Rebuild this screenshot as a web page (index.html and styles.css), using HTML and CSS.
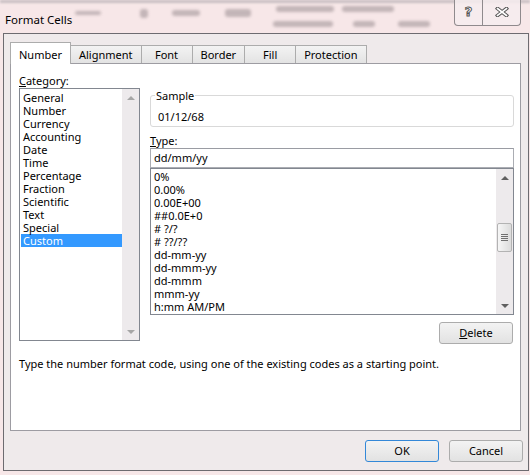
FILE: index.html
```html
<!DOCTYPE html>
<html lang="en">
<head>
<meta charset="utf-8">
<title>Format Cells</title>
<link rel="stylesheet" href="styles.css">
</head>
<body>
<div class="window">
  <div class="backdrop" aria-hidden="true">
    <span class="band"></span>
    <span class="blob b1"></span>
    <span class="blob b2"></span>
    <span class="blob b3"></span>
    <span class="blob b4"></span>
    <span class="blob b5"></span>
    <span class="blob b6"></span>
    <span class="blob b7"></span>
    <span class="blob b8"></span>
    <span class="blob b9"></span>
  </div>
  <header class="titlebar">
    <span class="title">Format Cells</span>
    <div class="caption">
      <span class="cap cap-help">?</span>
      <span class="cap cap-close">
        <svg width="14" height="10" viewBox="0 0 14 10">
          <path d="M2.5 1.5 L11.5 8.5 M11.5 1.5 L2.5 8.5" stroke="#555" stroke-width="3.6" stroke-linecap="square" fill="none"/>
          <path d="M2.5 1.5 L11.5 8.5 M11.5 1.5 L2.5 8.5" stroke="#fff" stroke-width="1.6" stroke-linecap="square" fill="none"/>
        </svg>
      </span>
    </div>
  </header>
  <main class="client">
    <nav class="tabs">
      <span class="tab active">Number</span>
      <span class="tab">Alignment</span>
      <span class="tab">Font</span>
      <span class="tab">Border</span>
      <span class="tab">Fill</span>
      <span class="tab">Protection</span>
    </nav>
    <section class="panel">
      <div class="panel-grid">
        <div class="label cat-label"><u>C</u>ategory:</div>
        <div class="listbox cat-list">
          <ul class="items">
            <li>General</li>
            <li>Number</li>
            <li>Currency</li>
            <li>Accounting</li>
            <li>Date</li>
            <li>Time</li>
            <li>Percentage</li>
            <li>Fraction</li>
            <li>Scientific</li>
            <li>Text</li>
            <li>Special</li>
            <li class="selected">Custom</li>
          </ul>
          <div class="vscroll disabled">
            <span class="arrow up"></span>
            <span class="track"></span>
            <span class="arrow down"></span>
          </div>
        </div>
        <div class="right">
          <fieldset class="sample">
            <legend>Sample</legend>
            <div class="sample-value">01/12/68</div>
          </fieldset>
          <div class="label type-label"><u>T</u>ype:</div>
          <div class="textbox">dd/mm/yy</div>
          <div class="listbox fmt-list">
            <ul class="items">
              <li>0%</li>
              <li>0.00%</li>
              <li>0.00E+00</li>
              <li>##0.0E+0</li>
              <li># ?/?</li>
              <li># ??/??</li>
              <li>dd-mm-yy</li>
              <li>dd-mmm-yy</li>
              <li>dd-mmm</li>
              <li>mmm-yy</li>
              <li>h:mm AM/PM</li>
            </ul>
            <div class="vscroll">
              <span class="arrow up"></span>
              <span class="track"><span class="thumb"><i></i><i></i><i></i><i></i></span></span>
              <span class="arrow down"></span>
            </div>
          </div>
          <div class="delete-row"><button class="btn"><u>D</u>elete</button></div>
        </div>
      </div>
      <p class="desc">Type the number format code, using one of the existing codes as a starting point.</p>
    </section>
    <footer class="footer">
      <button class="btn default">OK</button>
      <button class="btn">Cancel</button>
    </footer>
  </main>
</div>
</body>
</html>
```

FILE: styles.css
```css
* { box-sizing: border-box; }
html, body { margin: 0; padding: 0; }
body {
  width: 530px;
  height: 475px;
  overflow: hidden;
  background: #f6e4e5;
  font-family: "Noto Sans", "DejaVu Sans", sans-serif;
  font-size: 11px;
  color: #000;
}
.window {
  position: relative;
  width: 530px;
  height: 475px;
  display: flex;
  flex-direction: column;
  background: #f7e7e8;
}

/* blurred excel ribbon behind the glass title bar */
.backdrop {
  position: absolute;
  left: 0;
  top: 0;
  width: 530px;
  height: 33px;
  overflow: hidden;
}
.band {
  position: absolute;
  left: 0;
  top: 0;
  width: 530px;
  height: 3px;
  background: #c9bfc3;
  filter: blur(1px);
}
.blob {
  position: absolute;
  height: 6px;
  background: rgba(110, 100, 106, 0.38);
  filter: blur(1.6px);
  border-radius: 3px;
}
.b1 { left: 75px; top: 11px; width: 26px; height: 4px; }
.b2 { left: 140px; top: 9px; width: 8px; height: 9px; }
.b3 { left: 172px; top: 10px; width: 28px; }
.b4 { left: 225px; top: 9px; width: 26px; height: 8px; }
.b5 { left: 276px; top: 6px; width: 58px; }
.b6 { left: 342px; top: 6px; width: 52px; }
.b7 { left: 273px; top: 21px; width: 60px; }
.b8 { left: 353px; top: 21px; width: 22px; }
.b9 { left: 398px; top: 21px; width: 32px; }

.titlebar {
  position: relative;
  height: 33px;
  display: flex;
  align-items: flex-start;
  padding: 0 9px 0 5px;
}
.title {
  margin-top: 12px;
  line-height: 15px;
  font-size: 11.5px;
}
.caption {
  margin-left: auto;
  margin-top: -1px;
  display: flex;
  height: 27px;
  border: 1px solid #8f8a8d;
  border-top: none;
  border-radius: 0 0 4px 4px;
  background: rgba(246, 236, 239, 0.85);
}
.cap {
  display: flex;
  align-items: center;
  justify-content: center;
  height: 100%;
}
.cap-help {
  width: 28px;
  border-right: 1px solid #8f8a8d;
  font-family: "DejaVu Sans", sans-serif;
  font-weight: bold;
  font-size: 13px;
  color: #fff;
  -webkit-text-stroke: 1px #555;
  padding-bottom: 2px;
}
.cap-close { width: 37px; padding-bottom: 1px; }

.client {
  margin: 0 1px 0 3px;
  height: 438px;
  border: 1px solid #6d6b70;
  background: #efeaeb;
  padding: 8px 5px 0 6px;
  display: flex;
  flex-direction: column;
}

.tabs {
  position: relative;
  z-index: 1;
  display: flex;
  align-items: flex-end;
  height: 21px;
}
.tab {
  height: 18px;
  min-width: 52px;
  padding: 1px 8px 0;
  line-height: 16px;
  text-align: center;
  border: 1px solid #acacac;
  border-bottom: none;
  background: linear-gradient(#f3f3f3, #e3e3e3);
}
.tab + .tab { margin-left: -1px; }
.tab.active {
  height: 22px;
  padding-top: 4px;
  margin-bottom: -1px;
  background: #fff;
}

.panel {
  height: 368px;
  margin-right: 2px;
  border: 1px solid #9d9ca2;
  background: #fff;
  padding: 9px 6px 0 8px;
}
.panel-grid {
  display: grid;
  grid-template-columns: 121px 1fr;
  column-gap: 10px;
}
.label { line-height: 15px; }
.cat-label { grid-column: 1; grid-row: 1; }
.cat-list { grid-column: 1; grid-row: 2; height: 253px; }
.right {
  grid-column: 2;
  grid-row: 2;
  display: flex;
  flex-direction: column;
}

.listbox {
  display: flex;
  border: 1px solid #828790;
  background: #fff;
}
.items {
  flex: 1;
  list-style: none;
  margin: 0;
  padding: 2px 0 0;
}
.items li {
  height: 13px;
  line-height: 13px;
  margin-left: 1px;
  padding-left: 2px;
  white-space: nowrap;
}
.items li.selected { background: #3399ff; color: #fff; }

.vscroll {
  width: 17px;
  display: flex;
  flex-direction: column;
  background: #edeaec;
}
.arrow {
  height: 17px;
  display: flex;
  align-items: center;
  justify-content: center;
}
.arrow::before {
  content: "";
  border-left: 4px solid transparent;
  border-right: 4px solid transparent;
}
.arrow.up::before { border-bottom: 4px solid #606060; }
.arrow.down::before { border-top: 4px solid #606060; }
.vscroll.disabled .arrow.up::before { border-bottom-color: #a6a6a6; }
.vscroll.disabled .arrow.down::before { border-top-color: #a6a6a6; }
.track { flex: 1; }
.thumb {
  display: flex;
  flex-direction: column;
  justify-content: center;
  align-items: center;
  gap: 1px;
  height: 29px;
  margin: 37px 1px 0;
  border: 1px solid #b3b3b3;
  border-radius: 2px;
  background: linear-gradient(90deg, #f6f6f6, #dcdcdc);
}
.thumb i {
  display: block;
  width: 7px;
  height: 1px;
  background: #707070;
}

.sample {
  margin: 0;
  height: 39px;
  padding: 0 0 1px 7px;
  border: 1px solid #d9d9d9;
  border-radius: 3px;
}
.sample legend {
  padding: 0 1px;
  margin-left: -3px;
  line-height: 15px;
}
.sample-value {
  line-height: 15px;
  margin-top: 6px;
}
.type-label { margin-top: 6px; }
.textbox {
  height: 20px;
  border: 1px solid #abadb3;
  border-top-color: #9a9ca3;
  line-height: 18px;
  padding-left: 3px;
}
.fmt-list { height: 147px; }
.fmt-list .items { padding-top: 1px; }
.delete-row {
  display: flex;
  justify-content: flex-end;
  margin-top: 7px;
  padding-right: 1px;
}

.btn {
  width: 74px;
  height: 22px;
  padding: 0;
  border: 1px solid #acacac;
  border-radius: 3px;
  background: linear-gradient(#f3f3f3, #e2e2e2);
  font: inherit;
  color: #000;
  line-height: 20px;
  text-align: center;
}
.btn.default { border-color: #3388d8; }

.desc {
  margin: 12px 0 0;
  line-height: 15px;
}

.footer {
  display: flex;
  justify-content: flex-end;
  gap: 10px;
  margin-top: 9px;
}
```
